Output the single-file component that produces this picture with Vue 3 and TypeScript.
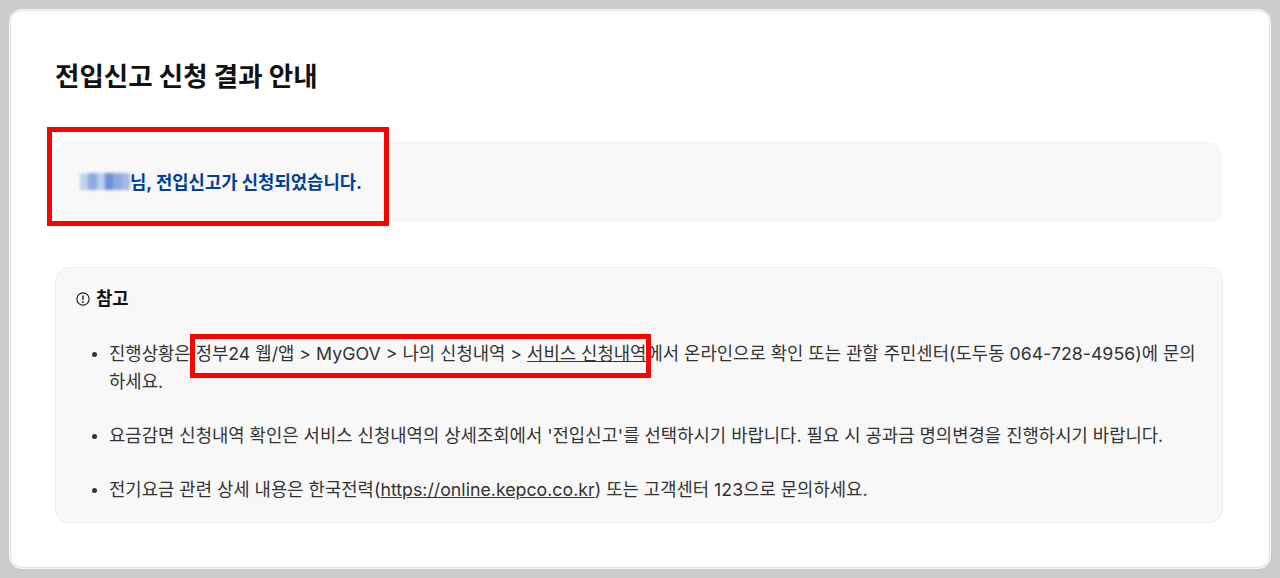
<script setup lang="ts">
const nameBlocks: string[] = ['#c3d3f0', '#8eaae2', '#bccdee', '#6c90d8', '#8ea9e0', '#a3b9e8']
</script>

<template>
  <main class="card">
    <h1 class="title">전입신고 신청 결과 안내</h1>
    <section class="result">
      <p class="result-text">
        <span class="blur" aria-hidden="true">
          <i v-for="c in nameBlocks" :key="c" :style="{ background: c }"></i>
        </span>님, 전입신고가 신청되었습니다.
      </p>
      <div class="mark mark-result"></div>
    </section>
    <section class="note">
      <h2 class="note-title">
        <svg class="icon" viewBox="0 0 14 14" width="14" height="14" aria-hidden="true">
          <circle cx="7" cy="7" r="6.1" fill="none" stroke="#222" stroke-width="1.2" />
          <path d="M7 3.6v4.2" fill="none" stroke="#222" stroke-width="1.5" />
          <circle cx="7" cy="10" r=".9" fill="#222" />
        </svg>
        참고
      </h2>
      <ul class="list">
        <li class="first">
          진행상황은 <span class="path">정부24 웹/앱 &gt; MyGOV &gt; 나의 신청내역 &gt; <u>서비스 신청내역</u><span class="mark mark-path"></span></span>에서 온라인으로 확인 또는 관할 주민센터(도두동 064-728-4956)에 문의하세요.
        </li>
        <li>요금감면 신청내역 확인은 서비스 신청내역의 상세조회에서 '전입신고'를 선택하시기 바랍니다. 필요 시 공과금 명의변경을 진행하시기 바랍니다.</li>
        <li>전기요금 관련 상세 내용은 한국전력(<u>https://online.kepco.co.kr</u>) 또는 고객센터 123으로 문의하세요.</li>
      </ul>
    </section>
  </main>
</template>

<style scoped>
.card {
  box-sizing: border-box;
  height: 558px;
  margin: 10px;
  padding: 45px 46px 0 44px;
  background: #fff;
  border: 1px solid #e4e4e4;
  box-shadow: 0 0 0 1px #f4f4f4;
  border-radius: 12px;
  font-family: Inter, "Noto Sans CJK KR", sans-serif;
  color: #1e1e1e;
}
.title {
  margin: 0;
  font-size: 26.5px;
  line-height: 40px;
  font-weight: 700;
  color: #111;
}
.result {
  position: relative;
  box-sizing: border-box;
  height: 82px;
  margin-top: 45px;
  background: #f8f8f9;
  border-radius: 14px;
  display: flex;
  align-items: center;
  padding: 0 0 2px 25px;
}
.result-text {
  margin: 0;
  font-size: 17.76px;
  font-weight: 700;
  color: #003e9c;
  display: flex;
  align-items: center;
  white-space: pre-wrap;
}
.blur {
  display: inline-flex;
  width: 50px;
  height: 17px;
  filter: blur(1.5px);
}
.blur i {
  flex: 1;
}
.mark {
  position: absolute;
  box-sizing: border-box;
  border: 5px solid #f00;
}
.mark-result {
  left: -8px;
  top: -14px;
  width: 342px;
  height: 99px;
}
.note {
  box-sizing: border-box;
  height: 256px;
  margin-top: 44px;
  padding: 21px 20px 0 20px;
  background: #f8f8f8;
  border: 1px solid #ececec;
  border-radius: 14px;
}
.note-title {
  margin: 0;
  display: flex;
  align-items: center;
  gap: 6px;
  font-size: 17.76px;
  line-height: 20px;
  font-weight: 700;
  color: #111;
}
.list {
  margin: 31px 0 0;
  padding: 0 0 0 33px;
  font-size: 17.76px;
  line-height: 28px;
  color: #333;
}
.list li {
  margin-top: 26px;
}
.list li.first {
  margin-top: 0;
}
.list li::marker {
  font-size: 15px;
}
.path {
  position: relative;
}
.mark-path {
  left: -6px;
  top: -9px;
  right: -5px;
  bottom: -14px;
}
</style>

<style>
html, body {
  margin: 0;
  background: #cbcbcb;
}
</style>
